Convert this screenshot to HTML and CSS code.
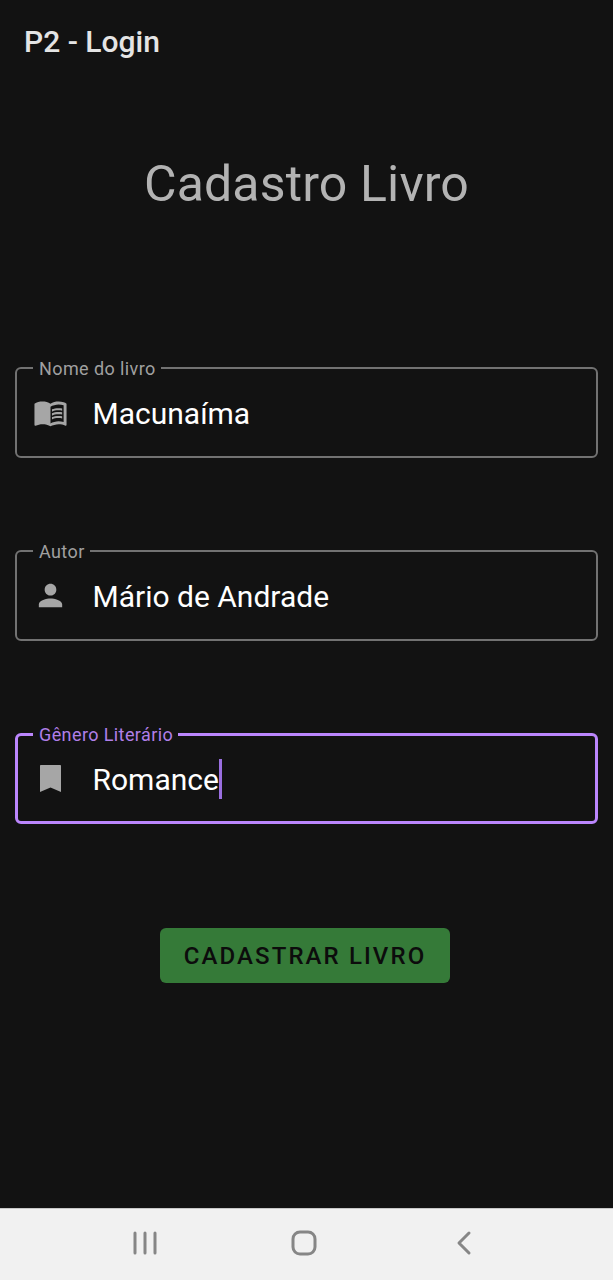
FILE: index.html
```html
<!DOCTYPE html>
<html lang="pt-BR">
<head>
    <meta charset="UTF-8">
    <meta name="viewport" content="width=device-width, initial-scale=1.0">
    <title>Cadastro Livro</title>
    <link rel="stylesheet" href="styles.css">
</head>
<body>
    <div class="tela">
        <header class="topo">P2 - Login</header>

        <main class="conteudo">
            <h1 class="titulo">Cadastro Livro</h1>

            <div class="campos">
                <div class="campo">
                    <label class="campo-label">Nome do livro</label>
                    <svg class="campo-icone" viewBox="0 0 24 24"><path d="M21 5c-1.11-.35-2.33-.5-3.5-.5-1.95 0-4.05.4-5.5 1.5-1.45-1.1-3.55-1.5-5.5-1.5S2.45 4.9 1 6v14.65c0 .25.25.5.5.5.1 0 .15-.05.25-.05C3.1 20.45 5.05 20 6.5 20c1.95 0 4.05.4 5.5 1.5 1.35-.85 3.8-1.5 5.5-1.5 1.65 0 3.35.3 4.75 1.05.1.05.15.05.25.05.25 0 .5-.25.5-.5V6c-.6-.45-1.25-.75-2-1zm0 13.5c-1.1-.35-2.3-.5-3.5-.5-1.7 0-4.15.65-5.5 1.5V8c1.35-.85 3.8-1.5 5.5-1.5 1.2 0 2.4.15 3.5.5v11.5z"/><path d="M17.5 10.5c.88 0 1.73.09 2.5.26V9.24c-.79-.15-1.64-.24-2.5-.24-1.7 0-3.24.29-4.5.83v1.66c1.13-.64 2.7-.99 4.5-.99zM13 12.49v1.66c1.13-.64 2.7-.99 4.5-.99.88 0 1.73.09 2.5.26V11.9c-.79-.15-1.64-.24-2.5-.24-1.7 0-3.24.3-4.5.83zM17.5 14.33c-1.7 0-3.24.29-4.5.83v1.66c1.13-.64 2.7-.99 4.5-.99.88 0 1.73.09 2.5.26v-1.52c-.79-.16-1.64-.24-2.5-.24z"/></svg>
                    <span class="campo-valor">Macunaíma</span>
                </div>

                <div class="campo">
                    <label class="campo-label">Autor</label>
                    <svg class="campo-icone" viewBox="0 0 24 24"><path d="M12 12c2.21 0 4-1.79 4-4s-1.79-4-4-4-4 1.79-4 4 1.79 4 4 4zm0 2c-2.67 0-8 1.34-8 4v2h16v-2c0-2.66-5.33-4-8-4z"/></svg>
                    <span class="campo-valor">Mário de Andrade</span>
                </div>

                <div class="campo ativo">
                    <label class="campo-label">Gênero Literário</label>
                    <svg class="campo-icone" viewBox="0 0 24 24"><path d="M5.4 2.8h13.2c.3 0 .6.3.6.6v17.8l-7.2-3-7.2 3V3.4c0-.3.3-.6.6-.6z"/></svg>
                    <span class="campo-valor">Romance<span class="cursor"></span></span>
                </div>
            </div>

            <button class="botao">CADASTRAR LIVRO</button>
        </main>

        <nav class="nav-android">
            <svg class="nav-icone" viewBox="0 0 28 28"><path d="M4 4v20M14 4v20M24 4v20"/></svg>
            <svg class="nav-icone nav-home" viewBox="0 0 28 28"><rect x="3" y="3" width="22" height="22" rx="7"/></svg>
            <svg class="nav-icone" viewBox="0 0 28 28"><path d="M19 4L9 14l10 10"/></svg>
        </nav>
    </div>
</body>
</html>
```

FILE: styles.css
```css
body {
    margin: 0;
    padding: 0;
    background-color: #121212;
    font-family: Roboto, "Liberation Sans", sans-serif;
}
.tela {
    display: flex;
    flex-direction: column;
    height: 1280px;
    overflow: hidden;
}
.topo {
    height: 84px;
    line-height: 84px;
    padding-left: 24px;
    font-size: 30px;
    font-weight: 500;
    color: #e4e4e4;
}
.conteudo {
    flex: 1;
    display: flex;
    flex-direction: column;
    align-items: center;
}
.titulo {
    margin: 64px 0 0;
    height: 72px;
    line-height: 72px;
    font-size: 50px;
    font-weight: 400;
    letter-spacing: 0.15px;
    color: #b3b3b3;
}
.campos {
    align-self: stretch;
    display: flex;
    flex-direction: column;
    gap: 92px;
    margin: 147px 15px 0;
}
.campo {
    position: relative;
    box-sizing: border-box;
    display: flex;
    align-items: center;
    height: 91px;
    border: 2px solid #727272;
    border-radius: 6px;
}
.campo-label {
    position: absolute;
    top: -10px;
    left: 16px;
    padding: 0 5px 0 6px;
    background-color: #121212;
    font-size: 18px;
    line-height: 20px;
    letter-spacing: 0.4px;
    color: #a0a0a0;
}
.campo-icone {
    width: 35px;
    height: 35px;
    margin-left: 16px;
    fill: #a6a6a6;
    flex-shrink: 0;
}
.campo-valor {
    margin-left: 24.5px;
    padding-top: 2px;
    font-size: 30px;
    color: #ffffff;
}
.ativo {
    border: 3px solid #bb86fc;
}
.ativo .campo-label {
    top: -11px;
    left: 15px;
    color: #b07fe8;
}
.ativo .campo-icone {
    margin-left: 15px;
}
.ativo .campo-valor {
    padding-top: 0;
}
.cursor {
    display: inline-block;
    width: 3px;
    height: 40px;
    margin-right: -3px;
    vertical-align: -9px;
    background-color: #9a6fe0;
}
.botao {
    box-sizing: border-box;
    width: 290px;
    height: 55px;
    margin: 104px 3px 0 0;
    padding: 0;
    border: none;
    border-radius: 6px;
    background-color: #357a38;
    color: #0c0c0c;
    font-family: Roboto, "Liberation Sans", sans-serif;
    font-size: 24px;
    font-weight: 500;
    letter-spacing: 2.1px;
}
.nav-android {
    box-sizing: border-box;
    height: 72px;
    display: flex;
    align-items: center;
    justify-content: space-between;
    padding: 0 135px 4px 131px;
    border-top: 1px solid #c8c8c8;
    background-color: #f1f1f1;
}
.nav-icone {
    width: 28px;
    height: 28px;
    fill: none;
    stroke: #868686;
    stroke-width: 3;
    stroke-linecap: round;
    stroke-linejoin: round;
}
.nav-home {
    margin-left: -1px;
}
```
